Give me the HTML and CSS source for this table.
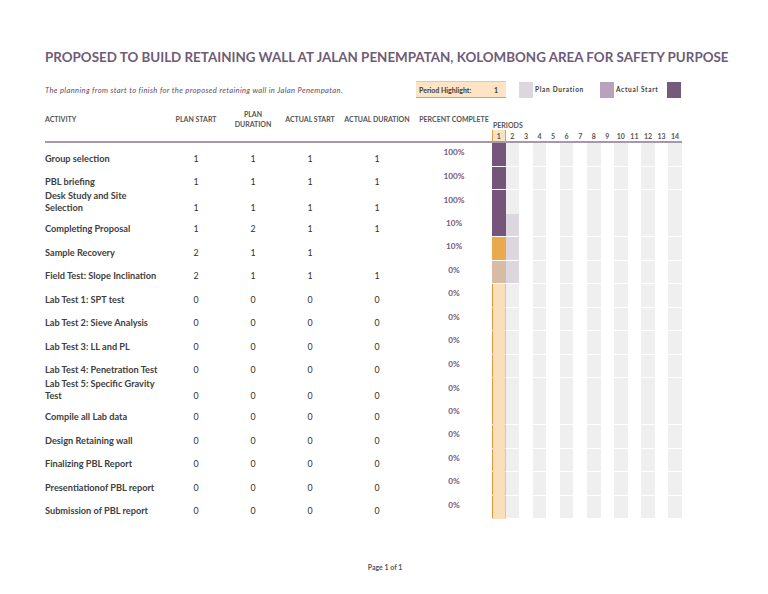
FILE: index.html
```html
<!DOCTYPE html>
<html lang="en">
<head>
<meta charset="utf-8">
<title>Retaining Wall Planner</title>
<link rel="stylesheet" href="styles.css">
</head>
<body>
<div class="page">
  <h1 class="title">PROPOSED TO BUILD RETAINING WALL AT JALAN PENEMPATAN, KOLOMBONG AREA FOR SAFETY PURPOSE</h1>
  <div class="intro">
    <p class="subtitle">The planning from start to finish for the proposed retaining wall in Jalan Penempatan.</p>
    <div class="ph"><span>Period Highlight:</span><span class="ph-val">1</span></div>
    <span class="sw sw-plan"></span><span class="lg">Plan Duration</span>
    <span class="sw sw-act"></span><span class="lg">Actual Start</span>
    <span class="sw sw-dark"></span>
  </div>

  <div class="table">
    <div class="row hdr">
      <div class="h-act">ACTIVITY</div>
      <div class="h-c">PLAN START</div>
      <div class="h-c">PLAN<br>DURATION</div>
      <div class="h-c">ACTUAL START</div>
      <div class="h-c">ACTUAL DURATION</div>
      <div class="h-c">PERCENT COMPLETE</div>
      <div class="phead">
        <div class="plabel">PERIODS</div>
        <div class="pnums"><b class="hl">1</b><b>2</b><b>3</b><b>4</b><b>5</b><b>6</b><b>7</b><b>8</b><b>9</b><b>10</b><b>11</b><b>12</b><b>13</b><b>14</b></div>
      </div>
    </div>

    <div class="row"><div class="act">Group selection</div><div class="num">1</div><div class="num">1</div><div class="num">1</div><div class="num">1</div><div class="pct">100%</div><span class="a"></span><span></span><span></span><span></span><span></span><span></span><span></span><span></span><span></span><span></span><span></span><span></span><span></span><span></span></div>
    <div class="row"><div class="act">PBL briefing</div><div class="num">1</div><div class="num">1</div><div class="num">1</div><div class="num">1</div><div class="pct">100%</div><span class="a"></span><span></span><span></span><span></span><span></span><span></span><span></span><span></span><span></span><span></span><span></span><span></span><span></span><span></span></div>
    <div class="row"><div class="act">Desk Study and Site<br>Selection</div><div class="num">1</div><div class="num">1</div><div class="num">1</div><div class="num">1</div><div class="pct">100%</div><span class="a"></span><span></span><span></span><span></span><span></span><span></span><span></span><span></span><span></span><span></span><span></span><span></span><span></span><span></span></div>
    <div class="row"><div class="act">Completing Proposal</div><div class="num">1</div><div class="num">2</div><div class="num">1</div><div class="num">1</div><div class="pct">10%</div><span class="a"></span><span class="p"></span><span></span><span></span><span></span><span></span><span></span><span></span><span></span><span></span><span></span><span></span><span></span><span></span></div>
    <div class="row"><div class="act">Sample Recovery</div><div class="num">2</div><div class="num">1</div><div class="num">1</div><div class="num"></div><div class="pct">10%</div><span class="o"></span><span class="p"></span><span></span><span></span><span></span><span></span><span></span><span></span><span></span><span></span><span></span><span></span><span></span><span></span></div>
    <div class="row"><div class="act">Field Test: Slope Inclination</div><div class="num">2</div><div class="num">1</div><div class="num">1</div><div class="num">1</div><div class="pct">0%</div><span class="t"></span><span class="p"></span><span></span><span></span><span></span><span></span><span></span><span></span><span></span><span></span><span></span><span></span><span></span><span></span></div>
    <div class="row"><div class="act">Lab Test 1: SPT test</div><div class="num">0</div><div class="num">0</div><div class="num">0</div><div class="num">0</div><div class="pct">0%</div><span class="h"></span><span></span><span></span><span></span><span></span><span></span><span></span><span></span><span></span><span></span><span></span><span></span><span></span><span></span></div>
    <div class="row"><div class="act">Lab Test 2: Sieve Analysis</div><div class="num">0</div><div class="num">0</div><div class="num">0</div><div class="num">0</div><div class="pct">0%</div><span class="h"></span><span></span><span></span><span></span><span></span><span></span><span></span><span></span><span></span><span></span><span></span><span></span><span></span><span></span></div>
    <div class="row"><div class="act">Lab Test 3: LL and PL</div><div class="num">0</div><div class="num">0</div><div class="num">0</div><div class="num">0</div><div class="pct">0%</div><span class="h"></span><span></span><span></span><span></span><span></span><span></span><span></span><span></span><span></span><span></span><span></span><span></span><span></span><span></span></div>
    <div class="row"><div class="act">Lab Test 4: Penetration Test</div><div class="num">0</div><div class="num">0</div><div class="num">0</div><div class="num">0</div><div class="pct">0%</div><span class="h"></span><span></span><span></span><span></span><span></span><span></span><span></span><span></span><span></span><span></span><span></span><span></span><span></span><span></span></div>
    <div class="row"><div class="act">Lab Test 5: Specific Gravity<br>Test</div><div class="num">0</div><div class="num">0</div><div class="num">0</div><div class="num">0</div><div class="pct">0%</div><span class="h"></span><span></span><span></span><span></span><span></span><span></span><span></span><span></span><span></span><span></span><span></span><span></span><span></span><span></span></div>
    <div class="row"><div class="act">Compile all Lab data</div><div class="num">0</div><div class="num">0</div><div class="num">0</div><div class="num">0</div><div class="pct">0%</div><span class="h"></span><span></span><span></span><span></span><span></span><span></span><span></span><span></span><span></span><span></span><span></span><span></span><span></span><span></span></div>
    <div class="row"><div class="act">Design Retaining wall</div><div class="num">0</div><div class="num">0</div><div class="num">0</div><div class="num">0</div><div class="pct">0%</div><span class="h"></span><span></span><span></span><span></span><span></span><span></span><span></span><span></span><span></span><span></span><span></span><span></span><span></span><span></span></div>
    <div class="row"><div class="act">Finalizing PBL Report</div><div class="num">0</div><div class="num">0</div><div class="num">0</div><div class="num">0</div><div class="pct">0%</div><span class="h"></span><span></span><span></span><span></span><span></span><span></span><span></span><span></span><span></span><span></span><span></span><span></span><span></span><span></span></div>
    <div class="row"><div class="act">Presentiationof PBL report</div><div class="num">0</div><div class="num">0</div><div class="num">0</div><div class="num">0</div><div class="pct">0%</div><span class="h"></span><span></span><span></span><span></span><span></span><span></span><span></span><span></span><span></span><span></span><span></span><span></span><span></span><span></span></div>
    <div class="row"><div class="act">Submission of PBL report</div><div class="num">0</div><div class="num">0</div><div class="num">0</div><div class="num">0</div><div class="pct">0%</div><span class="h"></span><span></span><span></span><span></span><span></span><span></span><span></span><span></span><span></span><span></span><span></span><span></span><span></span><span></span></div>
  </div>

  <div class="footer">Page 1 of 1</div>
</div>
</body>
</html>
```

FILE: styles.css
```css
html, body {
  margin: 0;
  padding: 0;
  background: #ffffff;
}
body {
  font-family: Lato, "Open Sans", "Liberation Sans", sans-serif;
  color: #404040;
}
.page {
  width: 723px;
  padding: 49px 0 0 45px;
}
.title {
  margin: 0;
  font-size: 13.38px;
  line-height: 16px;
  font-weight: 700;
  color: #6f5b77;
  white-space: nowrap;
}
.intro {
  display: flex;
  align-items: center;
  height: 17px;
  margin-top: 16px;
}
.subtitle {
  margin: 0;
  width: 371px;
  font-size: 7.6px;
  letter-spacing: 0.36px;
  font-style: italic;
  color: #5e4e66;
  white-space: nowrap;
}
.ph {
  width: 90px;
  height: 17px;
  box-sizing: border-box;
  background: #fce4c4;
  border-top: 1px solid #f1c688;
  border-bottom: 1px solid #e3a04a;
  display: flex;
  align-items: center;
  justify-content: space-between;
  padding: 0 8px 0 3px;
  font-size: 7px;
  font-weight: 700;
  color: #3d3d3d;
}
.sw {
  display: block;
  width: 14px;
  height: 16px;
  flex: none;
}
.sw-plan { background: #dcd7df; margin-left: 13px; }
.sw-act { background: #b7a3bc; margin-left: 16px; }
.sw-dark { background: #765a7b; margin-left: 9px; }
.lg {
  font-size: 6.5px;
  font-weight: 700;
  letter-spacing: 0.7px;
  color: #3d3d3d;
  margin-left: 2px;
  white-space: nowrap;
}

.table {
  margin-top: 7px;
  width: 637px;
}
.row {
  display: grid;
  grid-template-columns: 123px 56px 58px 56px 78px 76px repeat(14, 13.57px);
  height: 23.5px;
}
.hdr {
  height: 36px;
  border-bottom: 2px solid #a797ab;
}
.h-act, .h-c {
  font-size: 7px;
  font-weight: 700;
  color: #555555;
  line-height: 10px;
  display: flex;
  align-items: center;
  padding-bottom: 8px;
  white-space: nowrap;
}
.h-c {
  justify-content: center;
  text-align: center;
}
.phead {
  grid-column: span 14;
  display: flex;
  flex-direction: column;
  justify-content: flex-end;
}
.plabel {
  font-size: 7px;
  font-weight: 700;
  color: #555555;
  line-height: 9px;
  padding-left: 1px;
}
.pnums {
  display: grid;
  grid-template-columns: repeat(14, 13.57px);
  height: 11px;
}
.pnums b {
  font-size: 7px;
  font-weight: 700;
  color: #555555;
  display: flex;
  align-items: center;
  justify-content: center;
}
.pnums b.hl {
  background: #fbe3c2;
  box-shadow: inset 1px 0 #e2a04a, inset -1px 0 #e2a04a;
}

.act, .num {
  font-size: 9.2px;
  font-weight: 700;
  line-height: 12px;
  color: #404040;
  display: flex;
  align-items: flex-end;
  padding-bottom: 1.8px;
  white-space: nowrap;
}
.num {
  justify-content: center;
  font-weight: 400;
  color: #2f2f2f;
  font-size: 8.8px;
}
.pct {
  font-size: 8.2px;
  font-weight: 700;
  color: #735a7b;
  display: flex;
  align-items: center;
  justify-content: center;
  padding-bottom: 5px;
}
.row span {
  display: block;
  border-bottom: 1.5px solid #ffffff;
}
.row span:nth-of-type(even) {
  background: #efefef;
}
.row span.a { background: #755579; }
.row span.o { background: #e9a94c; }
.row span.t { background: #d8bba4; }
.row span.p { background: #dcd6df; }
.row span.h {
  background: #fadfbb;
  border-bottom-color: #fadfbb;
  box-shadow: inset 1px 0 #dc9a40, inset -1px 0 #efc283;
}
.footer {
  margin-top: 43px;
  width: 680px;
  text-align: center;
  font-size: 7px;
  font-weight: 700;
  color: #555555;
  line-height: 10px;
}
```
